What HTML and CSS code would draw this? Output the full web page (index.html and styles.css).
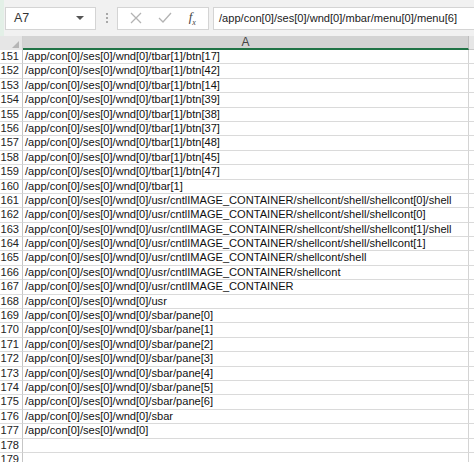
FILE: index.html
```html
<!DOCTYPE html>
<html lang="en">
<head>
    <meta charset="UTF-8">
    <title>Sheet</title>
    <link rel="stylesheet" href="styles.css">
</head>
<body>
    <!-- Formula bar -->
    <div class="formula-bar">
        <div class="name-box">
            <span>A7</span>
            <span class="arrow"></span>
        </div>
        <div class="grip"><i></i><i></i><i></i></div>
        <div class="fx-buttons">
            <svg width="12" height="12" viewBox="0 0 12 12"><path d="M1 1 L11 11 M11 1 L1 11" stroke="#b3b3b3" stroke-width="1.3" fill="none"/></svg>
            <svg width="14" height="12" viewBox="0 0 14 12"><path d="M1 6 L5 10 L13 1" stroke="#b3b3b3" stroke-width="1.3" fill="none"/></svg>
            <span class="fx">f<sub>x</sub></span>
        </div>
        <div class="formula">/app/con[0]/ses[0]/wnd[0]/mbar/menu[0]/menu[6]</div>
    </div>

    <!-- Column headers -->
    <div class="col-head">
        <div class="corner"><span class="tri"></span></div>
        <div class="col-a">A</div>
        <div class="col-b"></div>
    </div>

    <!-- Rows -->
    <div class="sheet">
        <div class="row"><div class="rh">151</div><div class="cell">/app/con[0]/ses[0]/wnd[0]/tbar[1]/btn[17]</div><div class="rest"></div></div>
        <div class="row"><div class="rh">152</div><div class="cell">/app/con[0]/ses[0]/wnd[0]/tbar[1]/btn[42]</div><div class="rest"></div></div>
        <div class="row"><div class="rh">153</div><div class="cell">/app/con[0]/ses[0]/wnd[0]/tbar[1]/btn[14]</div><div class="rest"></div></div>
        <div class="row"><div class="rh">154</div><div class="cell">/app/con[0]/ses[0]/wnd[0]/tbar[1]/btn[39]</div><div class="rest"></div></div>
        <div class="row"><div class="rh">155</div><div class="cell">/app/con[0]/ses[0]/wnd[0]/tbar[1]/btn[38]</div><div class="rest"></div></div>
        <div class="row"><div class="rh">156</div><div class="cell">/app/con[0]/ses[0]/wnd[0]/tbar[1]/btn[37]</div><div class="rest"></div></div>
        <div class="row"><div class="rh">157</div><div class="cell">/app/con[0]/ses[0]/wnd[0]/tbar[1]/btn[48]</div><div class="rest"></div></div>
        <div class="row"><div class="rh">158</div><div class="cell">/app/con[0]/ses[0]/wnd[0]/tbar[1]/btn[45]</div><div class="rest"></div></div>
        <div class="row"><div class="rh">159</div><div class="cell">/app/con[0]/ses[0]/wnd[0]/tbar[1]/btn[47]</div><div class="rest"></div></div>
        <div class="row"><div class="rh">160</div><div class="cell">/app/con[0]/ses[0]/wnd[0]/tbar[1]</div><div class="rest"></div></div>
        <div class="row"><div class="rh">161</div><div class="cell">/app/con[0]/ses[0]/wnd[0]/usr/cntlIMAGE_CONTAINER/shellcont/shell/shellcont[0]/shell</div><div class="rest"></div></div>
        <div class="row"><div class="rh">162</div><div class="cell">/app/con[0]/ses[0]/wnd[0]/usr/cntlIMAGE_CONTAINER/shellcont/shell/shellcont[0]</div><div class="rest"></div></div>
        <div class="row"><div class="rh">163</div><div class="cell">/app/con[0]/ses[0]/wnd[0]/usr/cntlIMAGE_CONTAINER/shellcont/shell/shellcont[1]/shell</div><div class="rest"></div></div>
        <div class="row"><div class="rh">164</div><div class="cell">/app/con[0]/ses[0]/wnd[0]/usr/cntlIMAGE_CONTAINER/shellcont/shell/shellcont[1]</div><div class="rest"></div></div>
        <div class="row"><div class="rh">165</div><div class="cell">/app/con[0]/ses[0]/wnd[0]/usr/cntlIMAGE_CONTAINER/shellcont/shell</div><div class="rest"></div></div>
        <div class="row"><div class="rh">166</div><div class="cell">/app/con[0]/ses[0]/wnd[0]/usr/cntlIMAGE_CONTAINER/shellcont</div><div class="rest"></div></div>
        <div class="row"><div class="rh">167</div><div class="cell">/app/con[0]/ses[0]/wnd[0]/usr/cntlIMAGE_CONTAINER</div><div class="rest"></div></div>
        <div class="row"><div class="rh">168</div><div class="cell">/app/con[0]/ses[0]/wnd[0]/usr</div><div class="rest"></div></div>
        <div class="row"><div class="rh">169</div><div class="cell">/app/con[0]/ses[0]/wnd[0]/sbar/pane[0]</div><div class="rest"></div></div>
        <div class="row"><div class="rh">170</div><div class="cell">/app/con[0]/ses[0]/wnd[0]/sbar/pane[1]</div><div class="rest"></div></div>
        <div class="row"><div class="rh">171</div><div class="cell">/app/con[0]/ses[0]/wnd[0]/sbar/pane[2]</div><div class="rest"></div></div>
        <div class="row"><div class="rh">172</div><div class="cell">/app/con[0]/ses[0]/wnd[0]/sbar/pane[3]</div><div class="rest"></div></div>
        <div class="row"><div class="rh">173</div><div class="cell">/app/con[0]/ses[0]/wnd[0]/sbar/pane[4]</div><div class="rest"></div></div>
        <div class="row"><div class="rh">174</div><div class="cell">/app/con[0]/ses[0]/wnd[0]/sbar/pane[5]</div><div class="rest"></div></div>
        <div class="row"><div class="rh">175</div><div class="cell">/app/con[0]/ses[0]/wnd[0]/sbar/pane[6]</div><div class="rest"></div></div>
        <div class="row"><div class="rh">176</div><div class="cell">/app/con[0]/ses[0]/wnd[0]/sbar</div><div class="rest"></div></div>
        <div class="row"><div class="rh">177</div><div class="cell">/app/con[0]/ses[0]/wnd[0]</div><div class="rest"></div></div>
        <div class="row"><div class="rh">178</div><div class="cell"></div><div class="rest"></div></div>
        <div class="row"><div class="rh">179</div><div class="cell"></div><div class="rest"></div></div>
    </div>
</body>
</html>
```

FILE: styles.css
```css
/* General */
body {
    margin: 0;
    font-family: 'Liberation Sans', Arial, sans-serif;
    background: #fff;
    color: #1a1a1a;
    overflow: hidden;
}

/* Formula bar */
.formula-bar {
    display: flex;
    align-items: center;
    height: 36px;
    padding-left: 1px;
    background: #f1f1f1;
    border-left: 4px solid #e3f0e7;
    box-sizing: border-box;
}
.name-box {
    width: 91px;
    height: 23px;
    box-sizing: border-box;
    background: #fff;
    border: 1px solid #d4d4d4;
    display: flex;
    align-items: center;
    justify-content: space-between;
    padding: 0 11px 0 8px;
    font-size: 12.5px;
    color: #333;
}
.arrow {
    width: 0;
    height: 0;
    border-left: 4px solid transparent;
    border-right: 4px solid transparent;
    border-top: 4px solid #555;
}
.grip {
    width: 21px;
    display: flex;
    flex-direction: column;
    align-items: center;
    gap: 2px;
}
.grip i {
    width: 2px;
    height: 2px;
    background: #a8a8a8;
}
.fx-buttons {
    width: 92px;
    height: 23px;
    box-sizing: border-box;
    background: #fff;
    border: 1px solid #d4d4d4;
    display: flex;
    align-items: center;
    justify-content: space-around;
    padding: 0 4px;
}
.fx {
    font-family: 'Liberation Serif', serif;
    font-style: italic;
    font-size: 13px;
    color: #444;
}
.fx sub {
    font-size: 8px;
}
.formula {
    flex: 1;
    height: 23px;
    margin-left: 4px;
    box-sizing: border-box;
    background: #fff;
    border: 1px solid #d4d4d4;
    border-right: none;
    padding-left: 5px;
    font-size: 11.1px;
    line-height: 21px;
    color: #222;
    white-space: nowrap;
}

/* Column header row */
.col-head {
    display: flex;
    height: 14px;
    background: #f1f1f1;
}
.corner {
    width: 23px;
    box-sizing: border-box;
    border-right: 1px solid #d0d0d0;
    background: #e6e6e6;
    position: relative;
}
.tri {
    position: absolute;
    right: 3px;
    bottom: 2px;
    width: 0;
    height: 0;
    border-left: 7px solid transparent;
    border-bottom: 7px solid #b5b5b5;
}
.col-a {
    width: 446px;
    box-sizing: border-box;
    background: #d3d3d3;
    border-bottom: 2px solid #217346;
    border-right: 1px solid #bdbdbd;
    text-align: center;
    font-size: 12px;
    line-height: 13px;
    color: #444;
}
.col-b {
    flex: 1;
    background: #e6e6e6;
    border-bottom: 1px solid #c8c8c8;
}

/* Rows */
.row {
    display: flex;
    height: 14.4px;
    box-sizing: border-box;
    font-size: 11.1px;
    line-height: 13.4px;
}
.rh {
    width: 23px;
    box-sizing: border-box;
    text-align: right;
    padding-right: 3px;
    border-right: 1px solid #c6c6c6;
    border-bottom: 1px solid #dcdcdc;
    color: #222;
    background: #fff;
}
.cell {
    width: 446px;
    box-sizing: border-box;
    padding-left: 2px;
    border-bottom: 1px solid #dadada;
    border-right: 1px solid #d4d4d4;
    white-space: nowrap;
    overflow: hidden;
    color: #111;
}
.rest {
    flex: 1;
    border-bottom: 1px solid #dadada;
}
```
